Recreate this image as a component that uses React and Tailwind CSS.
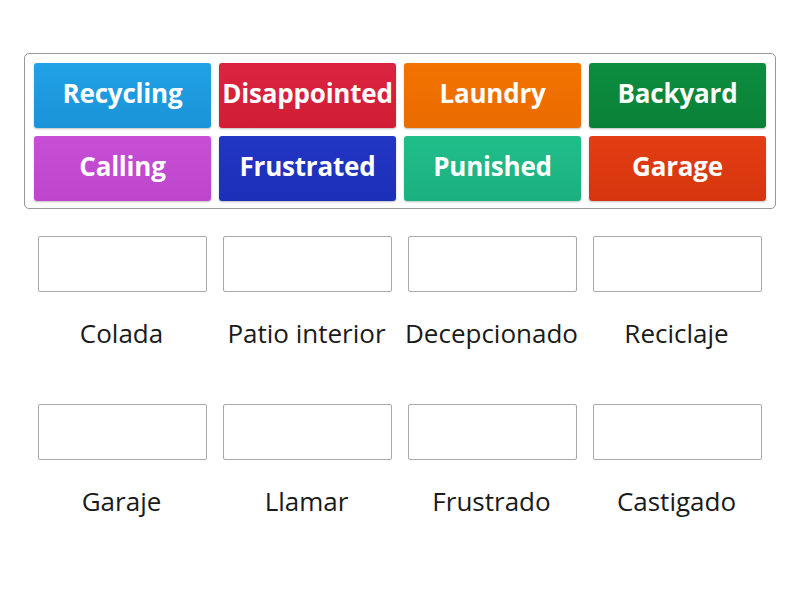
import React from "react";

const tiles = [
  { t: "Recycling", c: "bg-[linear-gradient(180deg,#21a2e6,#1b93d8)]" },
  { t: "Disappointed", c: "bg-[linear-gradient(180deg,#dc2440,#d11d36)]" },
  { t: "Laundry", c: "bg-[linear-gradient(180deg,#f37300,#ea6b00)]" },
  { t: "Backyard", c: "bg-[linear-gradient(180deg,#0c8d3f,#0a8137)]" },
  { t: "Calling", c: "bg-[linear-gradient(180deg,#c74fd6,#bd46cc)]" },
  { t: "Frustrated", c: "bg-[linear-gradient(180deg,#2236c5,#1b2fb8)]" },
  { t: "Punished", c: "bg-[linear-gradient(180deg,#21be8a,#1bb07f)]" },
  { t: "Garage", c: "bg-[linear-gradient(180deg,#e23e14,#d7350d)]" },
];

const row1 = ["Colada", "Patio interior", "Decepcionado", "Reciclaje"];
const row2 = ["Garaje", "Llamar", "Frustrado", "Castigado"];

function Slots({ labels }) {
  return (
    <div className="grid grid-cols-4 w-[740px] ml-[30px]">
      {labels.map((l) => (
        <div key={l} className="flex flex-col items-center">
          <div className="w-[169px] h-[56px] border border-[#a8a8a8] rounded-[2px] bg-white ml-[-1px]" />
          <div className="mt-[25px] h-[32px] leading-[32px] text-[26px] text-[#1a1a1a] whitespace-nowrap mr-[2px]">{l}</div>
        </div>
      ))}
    </div>
  );
}

export default function App() {
  return (
    <div className="w-[800px] h-[600px] bg-white overflow-hidden" style={{ fontFamily: '"Open Sans", sans-serif' }}>
      <div className="pt-[53px] px-[24px]">
        <div className="border border-[#9a9a9a] rounded-[5px] pt-[9px] pb-[7px] px-[9px]">
          <div className="grid grid-cols-4 gap-[8px]">
            {tiles.map((x) => (
              <div
                key={x.t}
                className={`${x.c} h-[65px] pb-[4px] rounded-[3px] shadow-[0_1px_2px_rgba(0,0,0,0.25)] flex items-center justify-center text-white font-bold text-[26px] tracking-[-0.2px] whitespace-nowrap`}
              >
                {x.t}
              </div>
            ))}
          </div>
        </div>
      </div>
      <div className="mt-[27px]">
        <Slots labels={row1} />
      </div>
      <div className="mt-[55px]">
        <Slots labels={row2} />
      </div>
    </div>
  );
}
